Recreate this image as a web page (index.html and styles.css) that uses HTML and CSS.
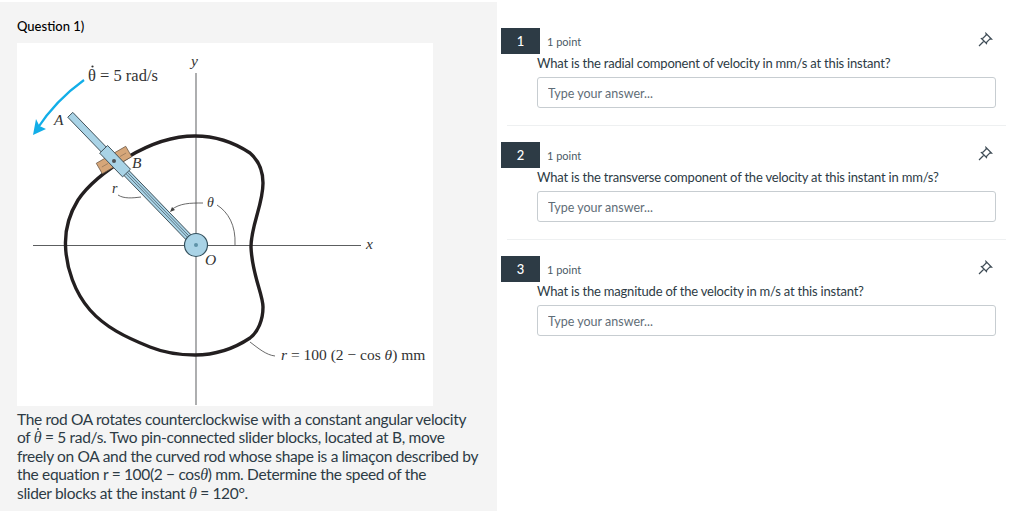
FILE: index.html
```html
<!DOCTYPE html>
<html lang="en">
<head>
<meta charset="utf-8">
<title>Question 1</title>
<link rel="stylesheet" href="styles.css">
</head>
<body>
<main class="page">
  <section class="case">
    <h2 class="case-title">Question 1)</h2>
    <svg class="figure" viewBox="17 43 416 363" width="416" height="363" role="img" aria-label="Limacon diagram">
      <rect x="17" y="43" width="416" height="363" fill="#fff"/>
      <path d="M196 73V405" stroke="#77797b" stroke-width="1.200" fill="none"/>
      <path d="M33 245.500H361" stroke="#5c5e60" stroke-width="1.200" fill="none"/>
      <path d="M65.500 245C66 268 75 293 90 310C105 327 125 337 150 347C165 353 180 355 195 355C215 355 235 348 250 338C258 332 263 320 263 307C263 294 252 275 251 247C251 225 263 205 263 183C263 170 258 160 250 153C235 143 215 136 195 136C170 136 148 145 128 157C110 168 90 182 78 200C70 213 65 230 65.500 245Z" fill="none" stroke="#231f20" stroke-width="3.400"/>
      <path d="M84 80C66 93 50 109 37 129" fill="none" stroke="#12aee8" stroke-width="2.200"/>
      <path d="M33 135L36 119L39.500 126L46 129Z" fill="#12aee8"/>
      <g transform="rotate(-30 114 160)">
        <rect x="97" y="154" width="34" height="12" fill="#d6a679" stroke="#6a5644" stroke-width=".7"/>
        <path d="M100 160H107M121 160H128" stroke="#8a6f55" stroke-width=".6" fill="none"/>
      </g>
      <g transform="translate(196 245) rotate(-134)">
        <rect x="0" y="-3.500" width="181" height="7" fill="#a9d3e6" stroke="#3d4c55" stroke-width=".9"/>
        <path d="M12 -.8H101M12 1.200H101" stroke="#40535e" stroke-width=".7" fill="none"/>
        <rect x="100" y="-5.500" width="33" height="11" fill="#a9d3e6" stroke="#3d4c55" stroke-width=".9"/>
      </g>
      <circle cx="114" cy="161" r="2" fill="#4d5256"/>
      <circle cx="196" cy="245" r="11.500" fill="#a9d3e6" stroke="#35525f" stroke-width="1.200"/>
      <circle cx="196" cy="245" r="2" fill="#5e93a8"/>
      <path d="M118 195C124 199 133 198 141 197" fill="none" stroke="#444" stroke-width=".8"/>
      <path d="M171 210C180 203 190 203 203 203M217 205C228 212 236 225 235 245" fill="none" stroke="#444" stroke-width=".8"/>
      <path d="M170 212l2 -5l3 3Z" fill="#444"/>
      <path d="M250 342C258 348 266 355 275 356" fill="none" stroke="#444" stroke-width=".8"/>
      <circle cx="92.500" cy="66.500" r="1.100" fill="#333"/>
      <text class="math wide" x="88" y="81">θ = 5 rad/s</text>
      <text class="math italic" x="191" y="66">y</text>
      <text class="math italic" x="54" y="125">A</text>
      <text class="math italic" x="132" y="168">B</text>
      <text class="math italic small" x="112" y="193">r</text>
      <text class="math italic small" x="207" y="207">θ</text>
      <text class="math italic" x="205" y="265">O</text>
      <text class="math italic" x="366" y="249">x</text>
      <text class="math" x="281" y="360"><tspan class="italic">r</tspan> = 100 (2 − cos <tspan class="italic">θ</tspan>) mm</text>
    </svg>
    <p class="case-text">The rod OA rotates counterclockwise with a constant angular velocity<br>of <i class="var var-dot">θ</i> = 5 rad/s. Two pin-connected slider blocks, located at B, move<br>freely on OA and the curved rod whose shape is a limaçon described by<br>the equation r = 100(2 − cos<i class="var">θ</i>) mm. Determine the speed of the<br>slider blocks at the instant <i class="var">θ</i> = 120°.</p>
  </section>
  <section class="questions">
    <article class="question">
      <header class="q-head">
        <span class="q-num">1</span>
        <span class="q-points">1 point</span>
        <svg class="pin" viewBox="0 0 16 16" width="16" height="16"><path d="M9 1.500L14.500 7L13 6.800L9.800 10L9.500 11.500L4.500 6.500L6 6.200L9.200 3ZM7 9L2 14" fill="none" stroke="#3f4c56" stroke-width="1.200"/></svg>
      </header>
      <p class="q-text">What is the radial component of velocity in mm/s at this instant?</p>
      <input class="answer" type="text" placeholder="Type your answer...">
    </article>
    <article class="question">
      <header class="q-head">
        <span class="q-num">2</span>
        <span class="q-points">1 point</span>
        <svg class="pin" viewBox="0 0 16 16" width="16" height="16"><path d="M9 1.500L14.500 7L13 6.800L9.800 10L9.500 11.500L4.500 6.500L6 6.200L9.200 3ZM7 9L2 14" fill="none" stroke="#3f4c56" stroke-width="1.200"/></svg>
      </header>
      <p class="q-text">What is the transverse component of the velocity at this instant in mm/s?</p>
      <input class="answer" type="text" placeholder="Type your answer...">
    </article>
    <article class="question">
      <header class="q-head">
        <span class="q-num">3</span>
        <span class="q-points">1 point</span>
        <svg class="pin" viewBox="0 0 16 16" width="16" height="16"><path d="M9 1.500L14.500 7L13 6.800L9.800 10L9.500 11.500L4.500 6.500L6 6.200L9.200 3ZM7 9L2 14" fill="none" stroke="#3f4c56" stroke-width="1.200"/></svg>
      </header>
      <p class="q-text">What is the magnitude of the velocity in m/s at this instant?</p>
      <input class="answer" type="text" placeholder="Type your answer...">
    </article>
  </section>
</main>
</body>
</html>
```
FILE: styles.css
```css
* { box-sizing: border-box; }
html, body { margin: 0; height: 511px; overflow: hidden; background: #fff; }
body { font-family: Lato, "Liberation Sans", sans-serif; color: #2d3b45; }
.page { display: flex; height: 511px; }
.case {
  width: 497px; margin-top: 2px; padding: 16px 0 0 17px;
  background: #f4f4f4; flex: none;
}
.case-title { margin: 0 0 9px; font-size: 13px; line-height: 16px; font-weight: 500; color: #000; }
.figure { display: block; }
.math { font-family: "Liberation Serif", serif; font-size: 15.500px; fill: #333; }
.wide { font-size: 16.500px; }
.italic { font-style: italic; }
.small { font-size: 14px; }
.case-text {
  margin: 4px 0 0; font-size: 15.500px; letter-spacing: -.32px; line-height: 18px;
  width: 470px; white-space: nowrap;
}
.var { font-family: "Liberation Serif", serif; font-size: 16px; }
.var-dot { position: relative; }
.var-dot::after {
  content: ""; position: absolute; left: 3px; top: -1px;
  width: 2px; height: 2px; border-radius: 50%; background: #2d3b45;
}
.questions { flex: 1; padding: 28px 8px 0 10px; }
.question { padding-bottom: 17px; margin-bottom: 16px; border-bottom: 1px solid #eef0f1; }
.question:last-child { border-bottom: 0; }
.q-head { display: flex; align-items: center; height: 26px; padding-right: 13px; }
.q-num {
  width: 39px; height: 26px; margin-left: -6px; background: #2d3b45; color: #fff;
  font-size: 13px; font-weight: 500; line-height: 26px; text-align: center;
}
.q-points { margin-left: 7px; font-size: 11px; color: #4a5a66; }
.pin { margin-left: auto; margin-top: -2px; }
.q-text { margin: 0 0 5px 30px; font-size: 13px; letter-spacing: -.2px; line-height: 18px; }
.answer {
  display: block; width: 459px; height: 31px; margin-left: 30px; padding: 1px 10px 0;
  border: 1px solid #c7cdd1; border-radius: 3px; background: #fff;
  font-family: inherit; font-size: 12.500px; outline: none;
}
.answer::placeholder { color: #5f6d77; opacity: 1; }
```
